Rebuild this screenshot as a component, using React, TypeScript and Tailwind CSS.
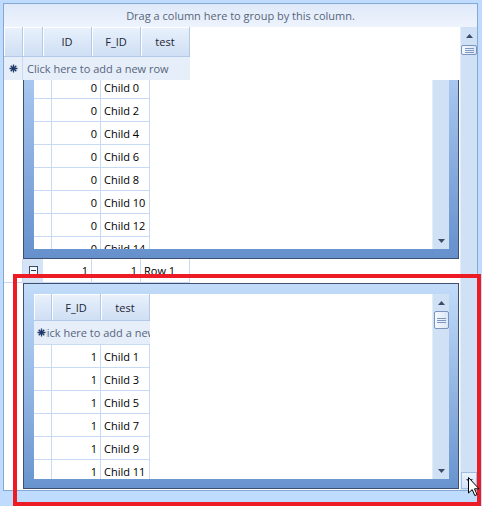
import React from "react";

function UpArrow() {
  return (
    <svg width="7" height="4" viewBox="0 0 7 4">
      <path d="M0 4 L3.5 0 L7 4 Z" fill="#3b4b68" />
    </svg>
  );
}

function DownArrow() {
  return (
    <svg width="7" height="4" viewBox="0 0 7 4">
      <path d="M0 0 L7 0 L3.5 4 Z" fill="#3b4b68" />
    </svg>
  );
}

function Grip() {
  return (
    <svg width="9" height="5" viewBox="0 0 9 5">
      <path d="M0 0.5 H9 M0 2.5 H9 M0 4.5 H9" stroke="#7e97c0" strokeWidth="1" />
    </svg>
  );
}

function Star() {
  return (
    <svg width="9" height="9" viewBox="0 0 9 9">
      <path
        d="M4.5 0.5 V8.5 M0.5 4.5 H8.5 M1.7 1.7 L7.3 7.3 M7.3 1.7 L1.7 7.3"
        stroke="#1f3a6b"
        strokeWidth="1.3"
      />
    </svg>
  );
}

function Collapse() {
  return (
    <svg width="9" height="9" viewBox="0 0 9 9">
      <rect x="0.5" y="0.5" width="8" height="8" fill="#f4f8fe" stroke="#3e4c63" />
      <path d="M2 4.5 H7" stroke="#2a3650" strokeWidth="1" />
    </svg>
  );
}

function HeaderCell({ w, label }: { w: string; label?: string }) {
  return (
    <div
      className={`${w} h-full flex items-center justify-center bg-linear-to-b from-[#e9f1fc] to-[#cfdff4] border-r border-b border-[#b3c9e6] shadow-[inset_1px_1px_0_#ffffff] text-[#1c2636]`}
    >
      {label}
    </div>
  );
}

function ChildRow({ id, name }: { id: string; name: string }) {
  return (
    <div className="flex h-[23px] shrink-0">
      <div className="w-[18px] border-r border-b border-[#c8daf3]" />
      <div className="w-[49px] border-r border-b border-[#c8daf3] flex items-center justify-end pr-[3px] text-black">
        {id}
      </div>
      <div className="w-[49px] border-r border-b border-[#c8daf3] flex items-center pl-[3px] text-black whitespace-nowrap">
        {name}
      </div>
    </div>
  );
}

export default function App() {
  const child1 = [0, 2, 4, 6, 8, 10, 12, 14];
  const child2 = [1, 3, 5, 7, 9, 11];
  return (
    <div className="relative w-[482px] h-[506px] overflow-hidden bg-[#bfdbfd] pt-[3px] pl-[3px] font-['Open_Sans',sans-serif] text-[11px] leading-none">
      {/* grid frame */}
      <div className="w-[475px] h-[488px] border border-[#86a8d4] flex flex-col bg-white">
        {/* group panel */}
        <div className="h-[23px] shrink-0 flex items-center justify-center bg-linear-to-b from-[#dfe9f9] to-[#eef4fd] text-[#56657a]">
          Drag a column here to group by this column.
        </div>
        <div className="flex flex-1 min-h-0">
          {/* content */}
          <div className="w-[456px] flex flex-col bg-white overflow-hidden">
            {/* header row */}
            <div className="h-[30px] shrink-0 flex">
              <HeaderCell w="w-[19px]" />
              <HeaderCell w="w-[20px]" />
              <HeaderCell w="w-[49px]" label="ID" />
              <HeaderCell w="w-[49px]" label="F_ID" />
              <HeaderCell w="w-[49px]" label="test" />
            </div>
            {/* new row */}
            <div className="h-[23px] shrink-0 flex">
              <div className="w-[19px] flex items-center justify-center bg-[#e6eefa] border-r border-[#c8daf3]">
                <Star />
              </div>
              <div className="w-[167px] flex items-center pl-[4px] bg-[#e6eefa] text-[#56657a] whitespace-nowrap">
                Click here to add a new row
              </div>
            </div>
            {/* detail 1 */}
            <div className="h-[179px] shrink-0 flex">
              <div className="w-[19px] bg-white" />
              <div className="w-[436px] border-l border-r border-b border-[#3f5070] bg-linear-to-b from-[#a8c7f0] to-[#6690cc] pl-[10px] pr-[9px] pb-[9px] flex">
                <div className="flex-1 flex bg-white">
                  <div className="w-[398px] overflow-hidden">
                    <div className="-mt-[4px] flex flex-col">
                      {child1.map((n) => (
                        <ChildRow key={n} id="0" name={`Child ${n}`} />
                      ))}
                    </div>
                  </div>
                  <div className="w-[17px] bg-[#d0e1f5] border-l border-[#e2edfa] flex flex-col justify-end items-center">
                    <div className="h-[17px] flex items-center justify-center">
                      <DownArrow />
                    </div>
                  </div>
                </div>
              </div>
            </div>
            {/* master row 1 */}
            <div className="h-[24px] shrink-0 flex">
              <div className="w-[19px] border-r border-b border-[#c8daf3]" />
              <div className="w-[20px] flex items-center justify-center bg-[#d5e3f6] border-b border-[#c8daf3]">
                <Collapse />
              </div>
              <div className="w-[49px] border-r border-b border-[#c8daf3] flex items-center justify-end pr-[3px] text-black">
                1
              </div>
              <div className="w-[49px] border-r border-b border-[#c8daf3] flex items-center justify-end pr-[3px] text-black">
                1
              </div>
              <div className="w-[49px] border-r border-b border-[#c8daf3] flex items-center pl-[3px] text-black">
                Row 1
              </div>
            </div>
            {/* detail 2 */}
            <div className="h-[206px] shrink-0 flex">
              <div className="w-[19px] bg-white" />
              <div className="w-[436px] border border-[#3f5070] bg-linear-to-b from-[#c2dcf9] to-[#6893ce] pt-[10px] pl-[10px] pr-[9px] pb-[9px] flex">
                <div className="flex-1 flex bg-white">
                  <div className="w-[398px] overflow-hidden flex flex-col">
                    <div className="h-[27px] shrink-0 flex">
                      <HeaderCell w="w-[18px]" />
                      <HeaderCell w="w-[49px]" label="F_ID" />
                      <HeaderCell w="w-[49px]" label="test" />
                    </div>
                    <div className="h-[24px] shrink-0 flex">
                      <div className="relative w-[116px] flex items-center overflow-hidden bg-[#e6eefa] text-[#56657a] whitespace-nowrap border-b border-[#c8daf3] pl-[3px]">
                        <span>Click here to add a new row</span>
                        <span className="absolute left-0 top-0 h-full w-[12px] pl-[3px] flex items-center bg-[#e6eefa]">
                          <Star />
                        </span>
                      </div>
                    </div>
                    {child2.map((n) => (
                      <ChildRow key={n} id="1" name={`Child ${n}`} />
                    ))}
                  </div>
                  <div className="w-[17px] bg-[#d0e1f5] border-l border-[#e2edfa] flex flex-col items-center">
                    <div className="h-[17px] w-full flex items-center justify-center">
                      <UpArrow />
                    </div>
                    <div className="w-[15px] h-[18px] rounded-[2px] border border-[#7a94bd] bg-linear-to-r from-[#f6f9fe] to-[#dbe7f7] flex items-center justify-center">
                      <Grip />
                    </div>
                    <div className="flex-1" />
                    <div className="h-[17px] w-full flex items-center justify-center">
                      <DownArrow />
                    </div>
                  </div>
                </div>
              </div>
            </div>
          </div>
          {/* outer scrollbar */}
          <div className="w-[17px] bg-[#d0e1f5] border-l border-[#e2edfa] flex flex-col items-center">
            <div className="h-[18px] w-full flex items-center justify-center">
              <UpArrow />
            </div>
            <div className="w-[16px] h-[10px] rounded-[2px] border border-[#7a94bd] bg-linear-to-r from-[#f6f9fe] to-[#dbe7f7] flex items-center justify-center">
              <Grip />
            </div>
            <div className="flex-1" />
            <div className="h-[17px] w-[16px] mb-[1px] border border-[#9fbbe0] bg-linear-to-b from-[#eaf2fd] to-[#d3e3f7] flex items-center justify-center">
              <DownArrow />
            </div>
          </div>
        </div>
      </div>

      {/* red annotation rectangle */}
      <div className="absolute left-[13px] top-[274px] w-[468px] h-[232px] border-4 border-[#ed1c24] pointer-events-none" />

      {/* mouse cursor */}
      <svg
        className="absolute left-[468px] top-[477px]"
        width="12"
        height="20"
        viewBox="0 0 12 20"
      >
        <path
          d="M0.5 0.5 L0.5 16 L4.2 12.6 L6.8 18.6 L9 17.6 L6.5 11.8 L11 11.8 Z"
          fill="#ffffff"
          stroke="#000000"
          strokeWidth="1"
        />
      </svg>
    </div>
  );
}
